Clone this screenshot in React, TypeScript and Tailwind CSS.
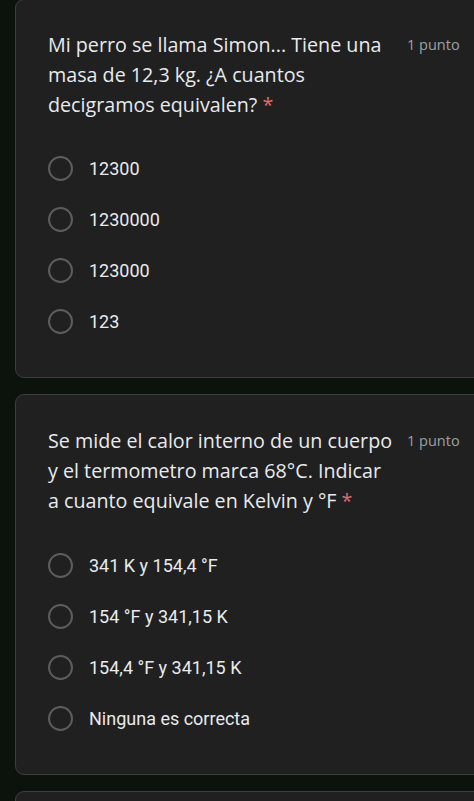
import React from "react";

const titleFont = { fontFamily: '"Open Sans", "Noto Sans", sans-serif' };

function Radio({ label }: { label: string }) {
  return (
    <div className="flex items-center h-[51px]">
      <div className="w-[25px] h-[25px] rounded-full border-2 border-[#5c5d5e] shrink-0" />
      <span
        className="ml-[16px] text-[18px] text-[#e8eaed] whitespace-nowrap"
        style={{ fontFamily: 'Roboto, "Liberation Sans", sans-serif' }}
      >
        {label}
      </span>
    </div>
  );
}

function Card({
  lines,
  options,
  mt,
  pt,
  gap,
}: {
  lines: string[];
  options: string[];
  mt: string;
  pt: string;
  gap: string;
}) {
  return (
    <div
      className={`${mt} ml-[15px] mr-[-20px] rounded-[9px] border border-[#3b3e3b] bg-[#202021] pl-[32px]`}
    >
      <div className={`flex items-start ${pt}`}>
        <div className="w-[359px] text-[19.7px] leading-[30px] text-[#e8eaed]" style={titleFont}>
          {lines.map((l, i) => (
            <div key={i} className="whitespace-nowrap">
              {l}
              {i === lines.length - 1 && <span className="text-[#e06b6b]"> *</span>}
            </div>
          ))}
        </div>
        <div
          className="mt-[3px] text-[14.5px] leading-[24px] text-[#9aa0a6] whitespace-nowrap"
          style={titleFont}
        >
          1 punto
        </div>
      </div>
      <div className={`${gap} pb-[30px]`}>
        {options.map((o) => (
          <Radio key={o} label={o} />
        ))}
      </div>
    </div>
  );
}

export default function App() {
  return (
    <div className="w-[474px] h-[801px] overflow-hidden bg-[#0b130c]">
      <Card
        mt="mt-[-1px]"
        pt="pt-[30px]"
        gap="pt-[23px]"
        lines={["Mi perro se llama Simon... Tiene una", "masa de 12,3 kg. ¿A cuantos", "decigramos equivalen?"]}
        options={["12300", "1230000", "123000", "123"]}
      />
      <Card
        mt="mt-[16px]"
        pt="pt-[31px]"
        gap="pt-[24px]"
        lines={["Se mide el calor interno de un cuerpo", "y el termometro marca 68°C. Indicar", "a cuanto equivale en Kelvin y °F"]}
        options={["341 K y 154,4 °F", "154 °F y 341,15 K", "154,4 °F y 341,15 K", "Ninguna es correcta"]}
      />
      <div className="mt-[16px] ml-[15px] mr-[-20px] h-[40px] rounded-[9px] border border-[#3b3e3b] bg-[#202021]" />
    </div>
  );
}
